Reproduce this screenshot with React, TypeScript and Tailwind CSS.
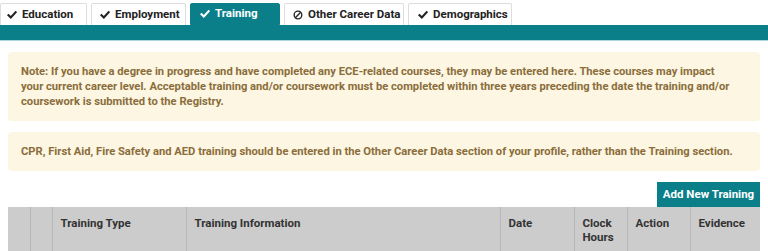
import React from 'react';

const Check = ({ className }: { className?: string }) => (
  <svg viewBox="0 0 12 12" className={className} fill="none" stroke="currentColor" strokeWidth={2.6} strokeLinecap="square">
    <polyline points="1.8,6.2 4.6,9 10.4,2.6" />
  </svg>
);

const Ban = ({ className }: { className?: string }) => (
  <svg viewBox="0 0 12 12" className={className} fill="none" stroke="currentColor" strokeWidth={1.6}>
    <circle cx="6" cy="6" r="4.6" />
    <line x1="9.2" y1="2.8" x2="2.8" y2="9.2" />
  </svg>
);

const tabs = [
  { label: 'Education', icon: 'check', cls: 'w-[87px] pl-[6px]' },
  { label: 'Employment', icon: 'check', cls: 'w-[95px] pl-[8px]' },
  { label: 'Training', icon: 'check', cls: 'w-[90px] pl-[9px]', active: true },
  { label: 'Other Career Data', icon: 'ban', cls: 'w-[120px] pl-[8px]' },
  { label: 'Demographics', icon: 'check', cls: 'w-[104px] pl-[9px]' },
];

const columns = [
  { label: '', w: 'w-[22px]' },
  { label: '', w: 'w-[22px]' },
  { label: 'Training Type', w: 'w-[134px]' },
  { label: 'Training Information', w: 'w-[314px]' },
  { label: 'Date', w: 'w-[74px]' },
  { label: 'Clock Hours', w: 'w-[53px]' },
  { label: 'Action', w: 'w-[63px]' },
  { label: 'Evidence', w: 'w-[70px]' },
];

const noteLines = [
  'Note: If you have a degree in progress and have completed any ECE-related courses, they may be entered here. These courses may impact',
  'your current career level. Acceptable training and/or coursework must be completed within three years preceding the date the training and/or',
  'coursework is submitted to the Registry.',
];

export default function App() {
  return (
    <div className="min-h-screen bg-white text-[11.2px] font-bold" style={{ fontFamily: 'Roboto, "Liberation Sans", sans-serif' }}>
      {/* Tabs */}
      <div className="flex items-end gap-[4px] pt-[3px] h-[25px]">
        {tabs.map((t) => (
          <div
            key={t.label}
            className={`${t.cls} shrink-0 whitespace-nowrap h-[22px] flex items-center gap-[5px] border rounded-t-[2px] text-[11.5px] ${
              t.active ? 'bg-[#0a7f8a] border-[#0a7f8a] text-white' : 'bg-white border-[#dddddd] border-b-0 text-[#222]'
            }`}
          >
            {t.icon === 'check' ? (
              <Check className="w-[10px] h-[10px] shrink-0" />
            ) : (
              <Ban className="w-[10px] h-[10px] shrink-0" />
            )}
            <span>{t.label}</span>
          </div>
        ))}
      </div>
      <div className="h-[15px] bg-[#0a7f8a]" />
      <div className="h-[1px] bg-[#a8d8dd]" />

      <div className="px-[8px] pt-[11px]">
        <div className="bg-[#fcf6e2] text-[#8a6d3b] rounded-[4px] px-[13px] py-[12px] leading-[15px]">
          {noteLines.map((l) => (
            <div key={l} className="whitespace-nowrap">{l}</div>
          ))}
        </div>
        <div className="mt-[11px] bg-[#fcf6e2] text-[#8a6d3b] rounded-[4px] px-[13px] py-[12px] leading-[15px] whitespace-nowrap">
          CPR, First Aid, Fire Safety and AED training should be entered in the Other Career Data section of your profile, rather than the Training section.
        </div>

        <div className="mt-[11px] flex justify-end">
          <button className="h-[25px] w-[103px] whitespace-nowrap bg-[#0a7f8a] text-white text-[11.5px] font-bold">Add New Training</button>
        </div>

        <table className="w-full table-fixed border-collapse bg-[#cccccc] text-[#333]">
          <colgroup>
            {columns.map((c, i) => (
              <col key={i} className={c.w} />
            ))}
          </colgroup>
          <thead>
            <tr>
              {columns.map((c, i) => (
                <th
                  key={i}
                  className={`text-left align-top font-bold pt-[9px] pb-[9px] px-[8px] leading-[14px] text-[11.5px] ${
                    i > 0 ? 'border-l border-[#b8b8b8]' : ''
                  }`}
                >
                  {c.label === 'Clock Hours' ? (
                    <>
                      Clock
                      <br />
                      Hours
                    </>
                  ) : (
                    c.label
                  )}
                </th>
              ))}
            </tr>
          </thead>
        </table>
      </div>
    </div>
  );
}
